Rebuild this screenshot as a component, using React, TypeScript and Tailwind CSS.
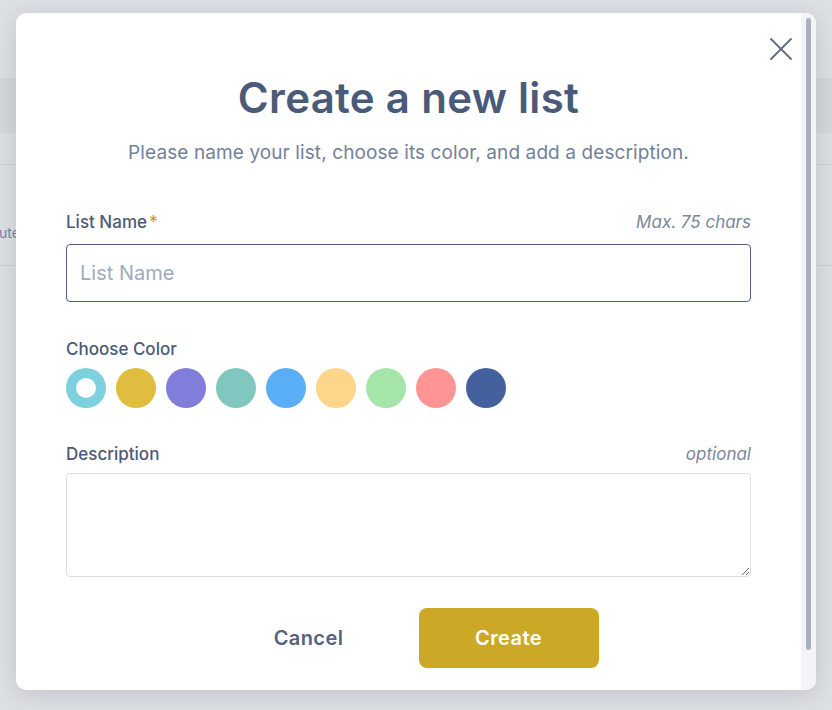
import { useState } from "react";
import { X } from "lucide-react";

const COLORS = [
  "#7dd1de",
  "#e0bd3e",
  "#807ddb",
  "#80c8bf",
  "#5aaef5",
  "#fdd68c",
  "#a6e5a8",
  "#fe9594",
  "#45619d",
];

export default function App() {
  const [name, setName] = useState("");
  const [description, setDescription] = useState("");
  const [selected, setSelected] = useState(0);

  return (
    <div
      className="relative h-[710px] w-[832px] overflow-hidden bg-[#dde0e4]"
      style={{ fontFamily: "Inter, 'Noto Sans', sans-serif" }}
    >
      {/* faded page behind the overlay */}
      <div className="flex flex-col pt-[78px]">
        <div className="h-[55px] bg-[#d4d7db]" />
        <div className="h-[31px]" />
        <div className="border-t border-[#cdd0d4]" />
        <div className="flex h-[100px] items-center pt-[34px] text-[14px] text-[#7a7fa8]">
          <span className="-ml-[1px]">ute</span>
        </div>
        <div className="border-t border-[#cdd0d4]" />
      </div>

      <div className="absolute inset-0 flex items-start justify-center pt-[13px]">
        <div className="relative h-[677px] w-[800px] rounded-[10px] bg-white shadow-[0_4px_24px_rgba(60,70,90,0.18)]">
          <button
            type="button"
            aria-label="Close"
            className="absolute right-[15px] top-[16px] text-[#5f6c82]"
          >
            <X className="h-[40px] w-[40px]" strokeWidth={1.1} />
          </button>

          <div className="flex flex-col px-[50px] pr-[65px] pt-[60px]">
            <h2 className="text-center text-[42px] leading-[50px] font-semibold tracking-[0.3px] text-[#4a5a78]">
              Create a new list
            </h2>
            <p className="mt-[17px] text-center text-[19px] leading-[26px] tracking-[0.1px] text-[#738199]">
              Please name your list, choose its color, and add a description.
            </p>

            <div className="mt-[44px] flex items-center justify-between">
              <label className="text-[17px] font-medium text-[#4a5a78]">
                List Name<span className="ml-[2px] text-[#c9a227]">*</span>
              </label>
              <span className="text-[17px] italic text-[#7a869b]">Max. 75 chars</span>
            </div>
            <input
              type="text"
              value={name}
              maxLength={75}
              onChange={(e) => setName(e.target.value)}
              placeholder="List Name"
              className="mt-[8px] h-[58px] w-full rounded-[4px] border border-[#4f5f7c] px-[13px] text-[20px] text-[#4a5a78] outline-none placeholder:text-[#a0abbb]"
            />

            <label className="mt-[35px] text-[17px] font-medium text-[#4a5a78]">
              Choose Color
            </label>
            <div className="mt-[6px] flex gap-[10px]">
              {COLORS.map((c, i) => (
                <button
                  key={c}
                  type="button"
                  onClick={() => setSelected(i)}
                  className="flex h-[40px] w-[40px] items-center justify-center rounded-full"
                  style={{ backgroundColor: c }}
                >
                  {selected === i && (
                    <span className="h-[20px] w-[20px] rounded-full bg-white" />
                  )}
                </button>
              ))}
            </div>

            <div className="mt-[34px] flex items-center justify-between">
              <label className="text-[17px] font-medium text-[#4a5a78]">Description</label>
              <span className="text-[17px] italic text-[#7a869b]">optional</span>
            </div>
            <textarea
              value={description}
              onChange={(e) => setDescription(e.target.value)}
              className="mt-[5px] h-[104px] w-full rounded-[4px] border border-[#dcdfe4] px-[13px] py-[10px] text-[16px] text-[#4a5a78] outline-none"
            />

            <div className="mt-[31px] flex items-center justify-center gap-[20px]">
              <button
                type="button"
                className="w-[180px] text-[20px] font-semibold tracking-[0.4px] text-[#55637d]"
              >
                Cancel
              </button>
              <button
                type="button"
                className="h-[60px] w-[180px] rounded-[8px] bg-[#cba927] text-[20px] font-semibold tracking-[0.4px] text-white"
              >
                Create
              </button>
            </div>
          </div>

          {/* scrollbar */}
          <div className="absolute right-0 top-0 h-full w-[15px] rounded-r-[10px] bg-[#f3f4f7]">
            <div className="mx-auto mt-[5px] h-[632px] w-[5px] rounded-full bg-[#a9b1bf]" />
          </div>
        </div>
      </div>
    </div>
  );
}
